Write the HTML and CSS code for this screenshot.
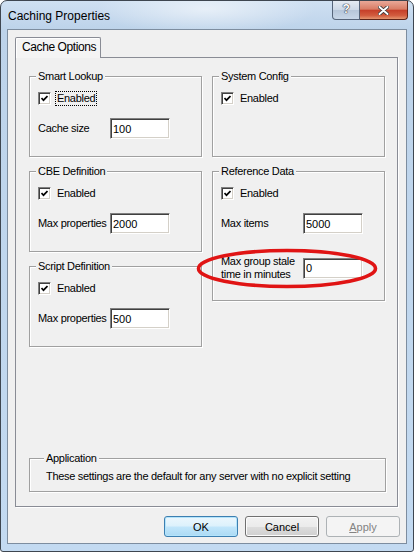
FILE: index.html
```html
<!DOCTYPE html>
<html lang="en">
<head>
    <meta charset="UTF-8">
    <title>Caching Properties</title>
    <link rel="stylesheet" href="styles.css">
</head>
<body>
    <div class="window">
        <div class="titlebar">
            <span class="title">Caching Properties</span>
            <div class="caption">
                <span class="cap-help">?</span>
                <span class="cap-close">
                    <svg width="11" height="9" viewBox="0 0 11 9">
                        <path d="M1.5 1 L9.5 8 M9.5 1 L1.5 8" stroke="#3a3a3a" stroke-width="3.6" stroke-linecap="round"/>
                        <path d="M1.5 1 L9.5 8 M9.5 1 L1.5 8" stroke="#fff" stroke-width="1.9" stroke-linecap="round"/>
                    </svg>
                </span>
            </div>
        </div>

        <div class="client">
            <div class="tabs">
                <div class="tab">Cache Options</div>
            </div>

            <div class="tab-page">
                <div class="columns">
                    <div class="col">
                        <div class="group">
                            <div class="group-title">Smart Lookup</div>
                            <div class="check-row">
                                <span class="check"><svg width="7" height="7" viewBox="0 0 7 7"><polyline points="0.5,3 2.5,5.2 6.5,1" fill="none" stroke="#000" stroke-width="1.7"/></svg></span>
                                <span class="check-label focus">Enabled</span>
                            </div>
                            <div class="field-row">
                                <span class="field-label">Cache size</span>
                                <input class="edit" type="text" value="100">
                            </div>
                        </div>

                        <div class="group">
                            <div class="group-title">CBE Definition</div>
                            <div class="check-row">
                                <span class="check"><svg width="7" height="7" viewBox="0 0 7 7"><polyline points="0.5,3 2.5,5.2 6.5,1" fill="none" stroke="#000" stroke-width="1.7"/></svg></span>
                                <span class="check-label">Enabled</span>
                            </div>
                            <div class="field-row">
                                <span class="field-label">Max properties</span>
                                <input class="edit" type="text" value="2000">
                            </div>
                        </div>

                        <div class="group">
                            <div class="group-title">Script Definition</div>
                            <div class="check-row">
                                <span class="check"><svg width="7" height="7" viewBox="0 0 7 7"><polyline points="0.5,3 2.5,5.2 6.5,1" fill="none" stroke="#000" stroke-width="1.7"/></svg></span>
                                <span class="check-label">Enabled</span>
                            </div>
                            <div class="field-row">
                                <span class="field-label">Max properties</span>
                                <input class="edit" type="text" value="500">
                            </div>
                        </div>
                    </div>

                    <div class="col">
                        <div class="group">
                            <div class="group-title">System Config</div>
                            <div class="check-row">
                                <span class="check"><svg width="7" height="7" viewBox="0 0 7 7"><polyline points="0.5,3 2.5,5.2 6.5,1" fill="none" stroke="#000" stroke-width="1.7"/></svg></span>
                                <span class="check-label">Enabled</span>
                            </div>
                        </div>

                        <div class="group ref-group">
                            <div class="group-title">Reference Data</div>
                            <div class="check-row">
                                <span class="check"><svg width="7" height="7" viewBox="0 0 7 7"><polyline points="0.5,3 2.5,5.2 6.5,1" fill="none" stroke="#000" stroke-width="1.7"/></svg></span>
                                <span class="check-label">Enabled</span>
                            </div>
                            <div class="field-row">
                                <span class="field-label wide">Max items</span>
                                <input class="edit" type="text" value="5000">
                            </div>
                            <div class="field-row tall">
                                <span class="field-label wide">Max group stale<br>time in minutes</span>
                                <input class="edit" type="text" value="0">
                            </div>
                            <!-- red annotation drawn over the dialog -->
                            <svg class="annot" width="182" height="42" viewBox="0 0 182 42">
                                <ellipse cx="91" cy="20.5" rx="88.5" ry="18" fill="none" stroke="#e01414" stroke-width="3.6"/>
                            </svg>
                        </div>
                    </div>
                </div>

                <div class="group app">
                    <div class="group-title">Application</div>
                    <div class="app-text">These settings are the default for any server with no explicit setting</div>
                </div>
            </div>

            <div class="buttons">
                <button class="btn default">OK</button>
                <button class="btn">Cancel</button>
                <button class="btn disabled"><u>A</u>pply</button>
            </div>
        </div>
    </div>
</body>
</html>
```

FILE: styles.css
```css
* {
    box-sizing: border-box;
}
body {
    margin: 0;
    font-family: "Liberation Sans", Arial, sans-serif;
    font-size: 11px;
    letter-spacing: -0.3px;
    color: #000;
    background: #fff;
}
.window {
    width: 414px;
    height: 552px;
    border: 1px solid #3e4650;
    border-radius: 7px 7px 3px 3px;
    padding: 0 6px 7px;
    display: flex;
    flex-direction: column;
    background:
        radial-gradient(ellipse 110px 26px at 205px 8px, rgba(255, 255, 255, 0.55), rgba(255, 255, 255, 0)),
        linear-gradient(#cfe0f2, #bdd3ea 28px, #c3daf1);
}
.titlebar {
    height: 28px;
    display: flex;
    align-items: flex-start;
}
.title {
    font-size: 12px;
    letter-spacing: 0;
    line-height: 14px;
    margin: 8px 0 0 1px;
}
.caption {
    display: flex;
    margin-left: auto;
    margin-right: -1px;
}
.cap-help {
    width: 28px;
    height: 19px;
    border: 1px solid #56657a;
    border-top: none;
    border-radius: 0 0 0 4px;
    background: linear-gradient(#e4ebf3, #ccd8e6 50%, #b6c6d9 51%, #c8d7e8);
    color: #fff;
    font-weight: bold;
    font-size: 12px;
    line-height: 17px;
    text-align: center;
    text-shadow: 0 0 1px #334, 0 0 1px #334, 0 0 1px #334;
}
.cap-close {
    width: 48px;
    height: 19px;
    border: 1px solid #5e2418;
    border-left: none;
    border-top: none;
    border-radius: 0 0 4px 0;
    background: linear-gradient(#eaa898, #d97d66 45%, #c6402a 52%, #d25b3e 80%, #e4956f);
    display: flex;
    align-items: center;
    justify-content: center;
}
.client {
    width: 400px;
    height: 515px;
    border: 1px solid #7d8d9f;
    background: #f0f0f0;
    padding: 7px 0 0 7px;
    display: flex;
    flex-direction: column;
}
.tabs {
    display: flex;
    height: 20px;
}
.tab {
    position: relative;
    z-index: 1;
    width: 86px;
    height: 21px;
    border: 1px solid #898c95;
    border-bottom: none;
    border-radius: 2px 2px 0 0;
    background: #f4f4f4;
    box-shadow: inset 1px 1px 0 #fff;
    padding-left: 6px;
    font-size: 12px;
    letter-spacing: -0.4px;
    line-height: 19px;
    white-space: nowrap;
}
.tab-page {
    width: 383px;
    height: 450px;
    border: 1px solid #898c95;
    box-shadow: 1px 1px 0 #fff;
    padding: 18px 11px 14px 13px;
    display: flex;
    flex-direction: column;
}
.columns {
    display: flex;
    gap: 10px;
}
.col {
    width: 173px;
    display: flex;
    flex-direction: column;
    gap: 14px;
}
.group {
    height: 81px;
    border: 1px solid #a0a0a0;
    box-shadow: 1px 1px 0 #fff, inset 1px 1px 0 #fff;
    padding-left: 8px;
}
.group-title {
    display: table;
    margin: -7px 0 0 -2px;
    padding: 0 2px;
    background: #f0f0f0;
    line-height: 13px;
}
.check-row {
    display: flex;
    align-items: center;
    height: 15px;
    margin-top: 8px;
}
.check {
    width: 13px;
    height: 13px;
    background: #fff;
    border: 1px solid;
    border-color: #808080 #fff #fff #808080;
    box-shadow: inset 1px 1px 0 #404040, inset -1px -1px 0 #d4d0c8;
    display: flex;
    align-items: center;
    justify-content: center;
}
.check-label {
    margin-left: 4px;
    padding: 0 1px;
    border: 1px dotted transparent;
    line-height: 13px;
}
.check-label.focus {
    border-color: #000;
}
.field-row {
    display: flex;
    align-items: center;
    margin-top: 12px;
}
.field-row.tall {
    margin-top: 21px;
}
.field-label {
    width: 72px;
    line-height: 13px;
    white-space: nowrap;
}
.field-label.wide {
    width: 82px;
}
.edit {
    width: 60px;
    height: 21px;
    margin: 0;
    border: 1px solid;
    border-color: #808080 #fff #fff #808080;
    box-shadow: inset 1px 1px 0 #404040, inset -1px -1px 0 #d4d0c8;
    background: #fff;
    padding: 0 2px;
    font: inherit;
    color: #000;
    outline: none;
}
.ref-group {
    position: relative;
    height: 130px;
}
.annot {
    position: absolute;
    left: -17px;
    top: 76px;
}
.app {
    height: 34px;
    margin-top: auto;
    padding-left: 16px;
}
.app-text {
    margin-top: 5px;
    line-height: 13px;
    white-space: nowrap;
}
.buttons {
    display: flex;
    justify-content: flex-end;
    gap: 7px;
    margin: 9px 6px 0 0;
}
.btn {
    width: 74px;
    height: 21px;
    padding: 0;
    border: 1px solid #707070;
    border-radius: 3px;
    background: linear-gradient(#f2f2f2, #ebebeb 50%, #dddddd 51%, #cfcfcf);
    box-shadow: inset 0 0 0 1px #fcfcfc;
    font: inherit;
    color: #000;
}
.btn.default {
    border-color: #3c7fb1;
    background: linear-gradient(#ecf7fd, #dcf1fc 48%, #c1e6fb 52%, #abdaf4);
    box-shadow: inset 0 0 0 1px #b4e4fb;
}
.btn.disabled {
    border-color: #adb2b5;
    background: #f4f4f4;
    box-shadow: none;
    color: #838383;
}
```
